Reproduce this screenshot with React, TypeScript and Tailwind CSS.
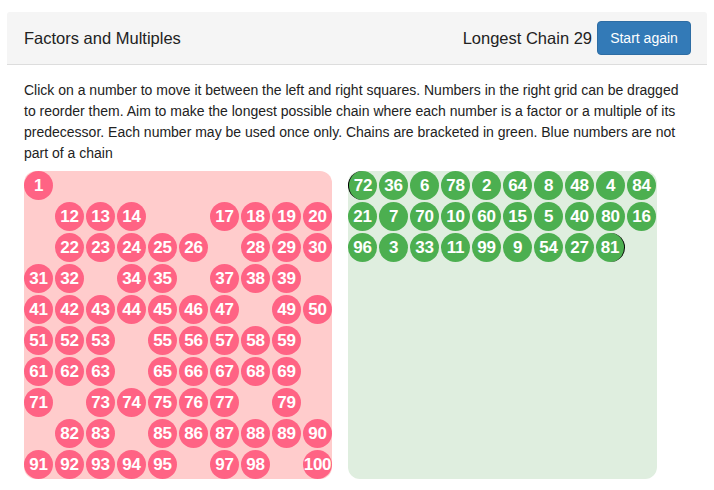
import React from "react";

const rightNums = [72, 36, 6, 78, 2, 64, 8, 48, 4, 84, 21, 7, 70, 10, 60, 15, 5, 40, 80, 16, 96, 3, 33, 11, 99, 9, 54, 27, 81];
const used = new Set(rightNums);
const all = Array.from({ length: 100 }, (_, i) => i + 1);

function Ball({ n, color, edge }: { n: number; color: "pink" | "green"; edge?: "l" | "r" }) {
  const bg = color === "pink" ? "bg-[#ff6384]" : "bg-[#4caf50]";
  const br = edge === "l" ? "border-l-[1.5px] border-black" : edge === "r" ? "border-r-[1.5px] border-black" : "";
  return (
    <div
      className={`w-[29px] h-[29px] rounded-full ${bg} ${br} flex items-center justify-center text-white font-bold text-[17px] leading-none tracking-[-0.3px] cursor-pointer select-none`}
    >
      {n}
    </div>
  );
}

export default function App() {
  return (
    <div className="bg-white text-[#333] pt-[12px] px-[7px]" style={{ fontFamily: '"Liberation Sans", Helvetica, Arial, sans-serif' }}>
      <div className="bg-[#f5f5f5] border-b border-[#dddddd] h-[53px] flex items-center justify-between pl-[17px] pr-[16px] rounded-t-[3px]">
        <div className="text-[16.5px] text-[#222]">Factors and Multiples</div>
        <div className="flex items-center gap-[5px]">
          <span className="text-[16.5px] text-[#222]">Longest Chain 29</span>
          <button className="bg-[#337ab7] border border-[#2e6da4] text-white text-[14px] rounded-[4px] w-[94px] h-[34px] leading-none">
            Start again
          </button>
        </div>
      </div>
      <div className="px-[17px]">
        <p className="text-[14px] leading-[21px] mt-[15px] w-[670px] text-[#222]">
          Click on a number to move it between the left and right squares. Numbers in the right grid can be dragged to reorder them. Aim to make the longest possible chain where each number is a factor or a multiple of its predecessor. Each number may be used once only. Chains are bracketed in green. Blue numbers are not part of a chain
        </p>
        <div className="flex gap-[16px] mt-[7px]">
          <div className="w-[308px] h-[308px] bg-[#ffcccc] rounded-[12px] grid grid-cols-[repeat(10,29px)] auto-rows-[29px] gap-[2px]">
            {all.map((n) =>
              used.has(n) ? <div key={n} /> : <Ball key={n} n={n} color="pink" />
            )}
          </div>
          <div className="w-[309px] h-[308px] bg-[#dfeedf] rounded-[12px] flex flex-wrap content-start gap-[2px]">
            {rightNums.map((n, i) => (
              <Ball key={n} n={n} color="green" edge={i === 0 ? "l" : i === rightNums.length - 1 ? "r" : undefined} />
            ))}
          </div>
        </div>
      </div>
    </div>
  );
}
